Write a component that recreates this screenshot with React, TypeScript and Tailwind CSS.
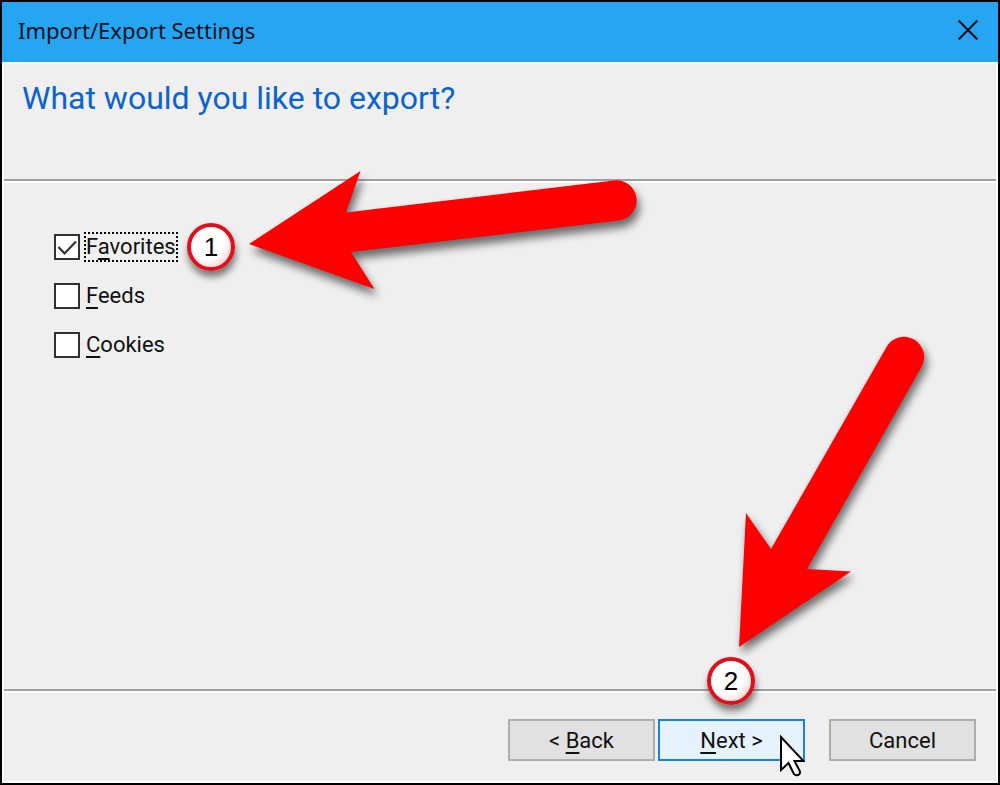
import { useState } from "react";

const options = [
  { id: "favorites", before: "F", key: "a", after: "vorites" },
  { id: "feeds", before: "", key: "F", after: "eeds" },
  { id: "cookies", before: "", key: "C", after: "ookies" },
];

function AccessKey({ children }: { children: string }) {
  return (
    <span className="underline decoration-2 underline-offset-4">{children}</span>
  );
}

function TitleBar() {
  return (
    <header className="flex h-[60px] items-center justify-between bg-[#26a5f3] pr-[18px] pb-1 pl-4">
      <h1 className="font-['Noto_Sans','Open_Sans',sans-serif] text-[22px] leading-8 text-[#06121c]">
        Import/Export Settings
      </h1>
      <button type="button" aria-label="Close" className="h-6 w-6">
        <svg viewBox="0 0 24 24" className="h-6 w-6" fill="none">
          <path d="M2.5 2.5l19 19M21.5 2.5l-19 19" stroke="#06121c" strokeWidth="2.2" />
        </svg>
      </button>
    </header>
  );
}

function Options() {
  const [checked, setChecked] = useState(["favorites"]);
  const toggle = (id: string) =>
    setChecked((c) => (c.includes(id) ? c.filter((i) => i !== id) : [...c, id]));

  return (
    <div className="flex flex-col items-start gap-[19px]">
      {options.map((item) => (
        <div key={item.id} className="flex items-center gap-1">
          <div className="relative h-[26px] w-[26px]">
            <input
              id={item.id}
              type="checkbox"
              checked={checked.includes(item.id)}
              onChange={() => toggle(item.id)}
              className="peer block h-[26px] w-[26px] appearance-none border-2 border-[#303030] bg-white"
            />
            <svg
              viewBox="0 0 26 26"
              fill="none"
              className="pointer-events-none absolute inset-0 hidden peer-checked:block"
            >
              <path d="M4.500 13l6 6.500L22 7.500" stroke="#303030" strokeWidth="2.2" />
            </svg>
          </div>
          <label
            htmlFor={item.id}
            className={
              item.id === "favorites"
                ? "border-2 border-dotted border-black text-[22px] leading-[26px]"
                : "border-2 border-transparent text-[22px] leading-[26px]"
            }
          >
            {item.before}
            <AccessKey>{item.key}</AccessKey>
            {item.after}
          </label>
        </div>
      ))}
    </div>
  );
}

function Footer() {
  return (
    <footer className="flex justify-end border-t-2 border-[#a0a0a0] shadow-[inset_0_2px_0_#fff] pt-7 pr-5 pb-5 text-[22px]">
      <button type="button" className="h-[42px] w-[147px] border-2 border-[#adadad] bg-[#e1e1e1]">
        &lt; <AccessKey>B</AccessKey>ack
      </button>
      <button type="button" className="ml-[3px] h-[42px] w-[147px] border-2 border-[#1583dc] bg-[#e5f1fb]">
        <AccessKey>N</AccessKey>ext &gt;
      </button>
      <button type="button" className="ml-6 h-[42px] w-[147px] border-2 border-[#adadad] bg-[#e1e1e1]">
        Cancel
      </button>
    </footer>
  );
}

function Step({ n, className }: { n: number; className: string }) {
  return (
    <div
      className={
        "absolute flex h-12 w-12 items-center justify-center rounded-full border-4 border-[#e0101a] bg-radial-[at_40%_35%] from-white from-50% to-[#ffb4b4] font-['Liberation_Sans',Arial,sans-serif] text-[26px] leading-none text-black shadow-[1px_6px_7px_rgba(0,0,0,0.5)] " +
        className
      }
    >
      {n}
    </div>
  );
}

export default function App() {
  return (
    <div className="relative flex min-h-screen flex-col border-2 border-black bg-[#efefef] font-['Roboto','Liberation_Sans',sans-serif] text-[#101010]">
      <TitleBar />
      <div className="flex grow flex-col border-2 border-white">
        <section className="h-[115px] px-[18px] pt-[14px]">
          <h2 className="text-[32px] leading-10 text-[#0b63ce]">
            What would you like to export?
          </h2>
        </section>
        <main className="grow border-t-2 border-[#a0a0a0] shadow-[inset_0_2px_0_#fff] px-[50px] pt-[51px]">
          <Options />
        </main>
        <Footer />
      </div>

      <svg
        viewBox="0 0 400 140"
        className="pointer-events-none absolute top-[158px] left-[238px] h-[140px] w-[400px] drop-shadow-[3px_7px_4px_rgba(0,0,0,0.55)]"
      >
        <path
          d="M9 84L120.500 11L106 52.500L374 20.500A20 20 0 0 1 379 60.500L111 92L134.500 129Z"
          fill="#f00"
        />
      </svg>
      <Step n={1} className="top-[221px] left-[185px]" />

      <svg
        viewBox="0 0 200 330"
        className="pointer-events-none absolute top-[328px] left-[728px] h-[330px] w-[200px] drop-shadow-[3px_6px_4px_rgba(0,0,0,0.55)]"
      >
        <path
          d="M9 317L16 183L41 219L156.500 17A20 20 0 0 1 191.500 37L77 239L121 241.500Z"
          fill="#f00"
        />
      </svg>
      <Step n={2} className="top-[655px] left-[705px]" />

      <svg
        viewBox="0 0 26 44"
        className="pointer-events-none absolute top-[732px] left-[777px] h-11 w-[26px]"
      >
        <path
          d="M2 3V36L9.500 29L15 40Q18 42.500 20.500 40Q21.500 38.500 20.500 36.500L15.500 27H24.500Z"
          fill="#fff"
          stroke="#000"
          strokeWidth="2"
        />
      </svg>
    </div>
  );
}
